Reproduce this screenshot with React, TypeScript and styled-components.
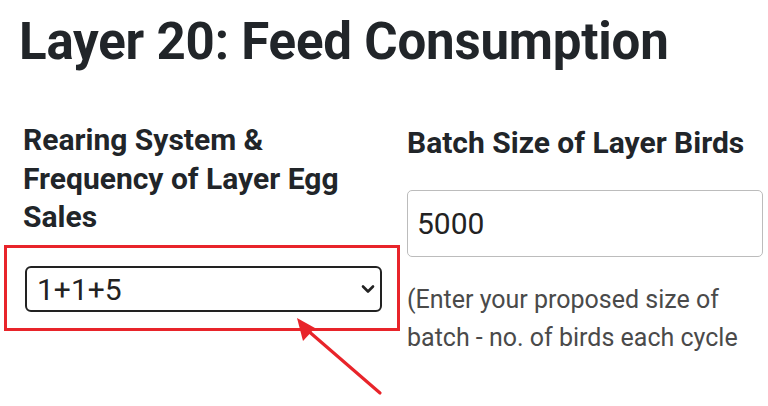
import React from "react";
import styled, { createGlobalStyle } from "styled-components";

const Global = createGlobalStyle`
  html, body { margin: 0; padding: 0; background: #fff; }
  body { font-family: Roboto, "Noto Sans", Arial, sans-serif; color: #212529; }
  * { box-sizing: border-box; }
`;

const Page = styled.div`
  position: relative;
  width: 768px;
  height: 406px;
  overflow: hidden;
  padding: 0 5px 0 23px;
`;

const Title = styled.h1`
  margin: 0 0 0 -4px;
  padding-top: 13px;
  font-size: 51px;
  line-height: 57px;
  font-weight: 700;
  letter-spacing: -0.2px;
  color: #212529;
`;

const Columns = styled.div`
  display: grid;
  grid-template-columns: 359px 356px;
  column-gap: 25px;
  margin-top: 51px;
`;

const Field = styled.div`
  display: flex;
  flex-direction: column;
`;

const Label = styled.label<{ $lines?: number }>`
  font-size: 30px;
  line-height: 38.5px;
  font-weight: 700;
  color: #212529;
  margin-top: ${(p) => (p.$lines === 1 ? "3px" : "0")};
`;

const Highlight = styled.div`
  position: relative;
  margin-top: 29.5px;
  margin-left: 2px;
  width: 357px;
`;

const RedBox = styled.div`
  position: absolute;
  left: -21px;
  right: -18px;
  top: -21px;
  bottom: -19px;
  border: 3px solid #e8242a;
  pointer-events: none;
`;

const Select = styled.div`
  display: flex;
  align-items: center;
  justify-content: space-between;
  height: 46px;
  border: 2.5px solid #222;
  border-radius: 6px;
  padding: 0 5px 0 10px;
  font-size: 30px;
  color: #222;
  background: #fff;
`;

const Chevron = styled.svg`
  width: 14px;
  height: 10px;
`;

const Input = styled.div`
  display: flex;
  align-items: center;
  height: 67px;
  margin-top: 27.5px;
  border: 1.5px solid #bcbcbc;
  border-radius: 5px;
  padding: 0 9px;
  font-size: 30px;
  color: #222;
`;

const Help = styled.p`
  margin: 24px 0 0 0;
  font-size: 25px;
  line-height: 38px;
  color: #4a4a4a;
  white-space: nowrap;
`;

const Arrow = styled.svg`
  position: absolute;
  left: 0;
  top: 0;
  width: 768px;
  height: 406px;
  pointer-events: none;
`;

export default function App() {
  return (
    <>
      <Global />
      <Page>
        <Title>Layer 20: Feed Consumption</Title>
        <Columns>
          <Field>
            <Label>
              Rearing System &amp;
              <br />
              Frequency of Layer Egg
              <br />
              Sales
            </Label>
            <Highlight>
              <RedBox />
              <Select>
                <span>1+1+5</span>
                <Chevron viewBox="0 0 14 10">
                  <path d="M2 2.5 L7 7.5 L12 2.5" fill="none" stroke="#222" strokeWidth="2.6" strokeLinecap="round" strokeLinejoin="round" />
                </Chevron>
              </Select>
            </Highlight>
          </Field>
          <Field>
            <Label $lines={1}>Batch Size of Layer Birds</Label>
            <Input>5000</Input>
            <Help>
              (Enter your proposed size of
              <br />
              batch - no. of birds each cycle
            </Help>
          </Field>
        </Columns>
        <Arrow viewBox="0 0 768 406">
          <line x1="380" y1="393" x2="306" y2="329" stroke="#e8242a" strokeWidth="3.2" strokeLinecap="round" />
          <polygon points="297,318 315,328 303,341" fill="#e8242a" />
        </Arrow>
      </Page>
    </>
  );
}
